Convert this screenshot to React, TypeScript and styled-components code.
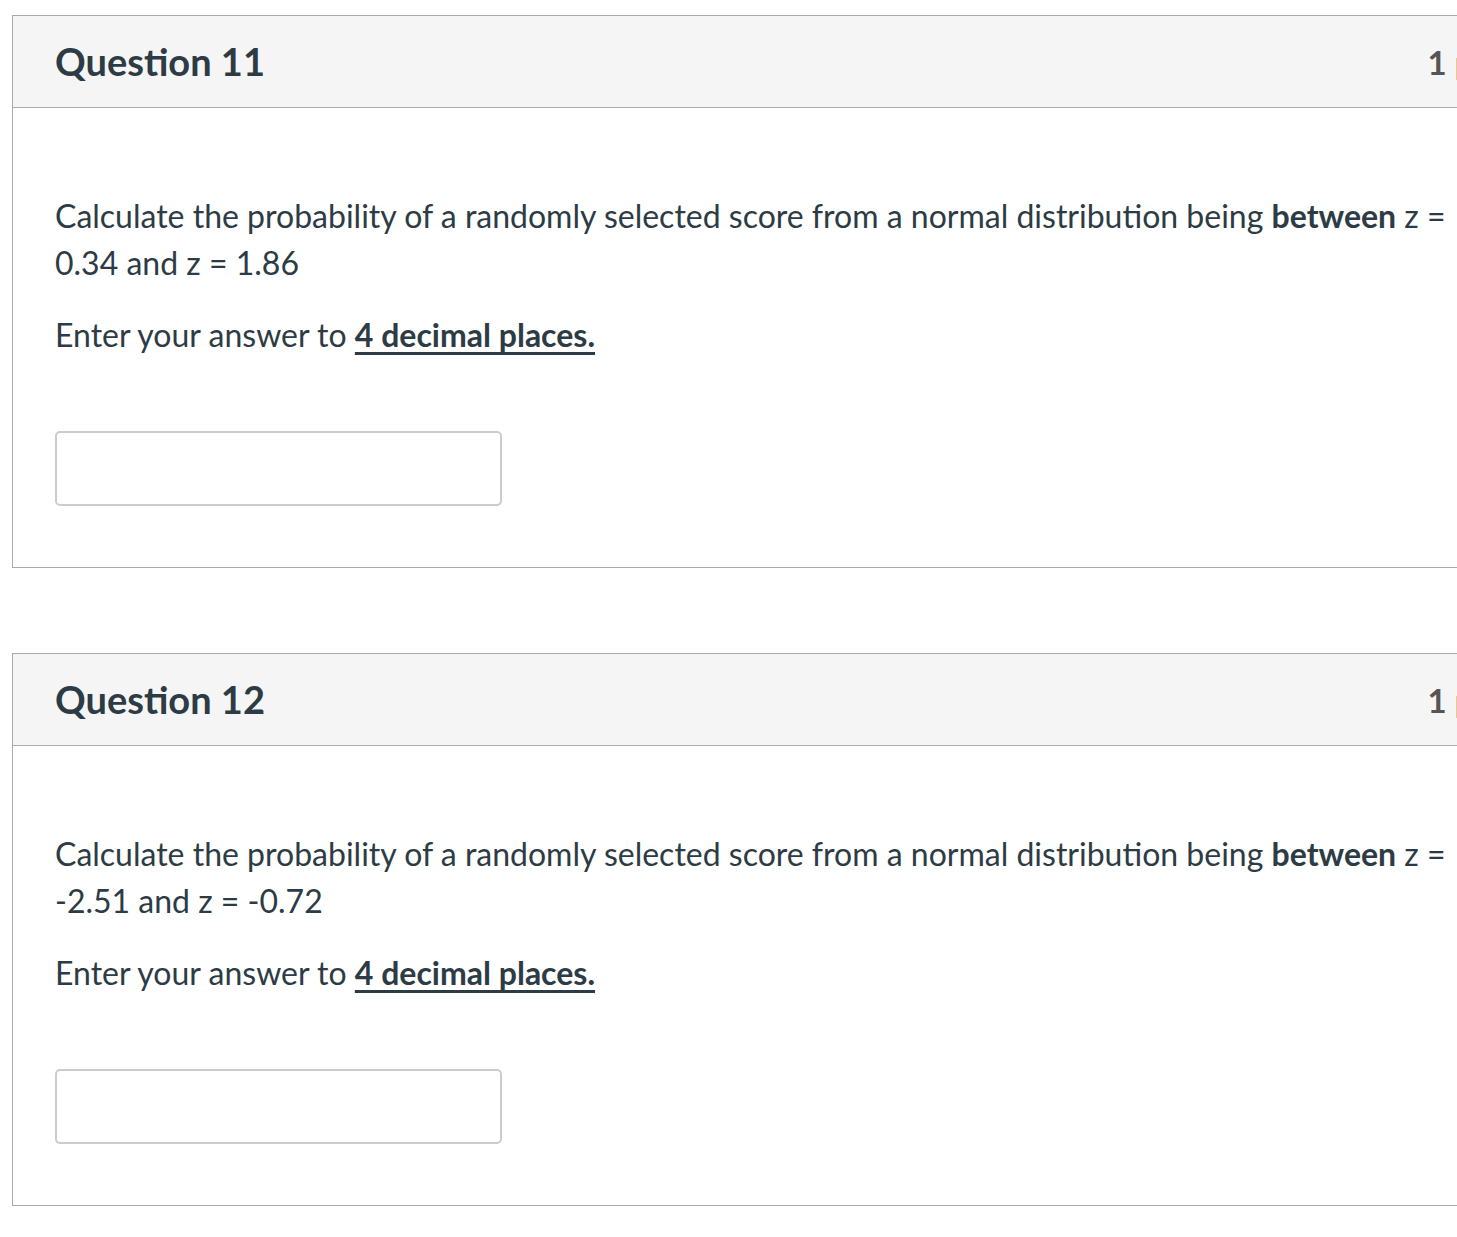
import React from 'react';
import styled, { createGlobalStyle } from 'styled-components';

const GlobalStyle = createGlobalStyle`
  html, body {
    margin: 0;
    padding: 0;
    background: #fff;
    overflow: hidden;
  }

  body {
    font-family: Lato, "Open Sans", sans-serif;
    color: #2d3b45;
  }
`;

const Page = styled.div`
  display: flex;
  flex-direction: column;
  gap: 85px;
  padding: 15px 0 0 12px;
  width: 1600px;
`;

const QuestionCard = styled.section`
  width: 1529px;
  border: 1px solid #aaa;
  background: #fff;
`;

const Header = styled.header`
  display: flex;
  align-items: center;
  justify-content: space-between;
  height: 92px;
  padding: 0 42px;
  background: #f5f5f5;
  border-bottom: 1px solid #aaa;
  box-sizing: border-box;

  h2 {
    margin: 0 0 2px;
    font-size: 38px;
    font-weight: 700;
    color: #2d3b45;
  }
`;

const Points = styled.span`
  font-size: 33px;
  font-weight: 700;
  color: #555;
`;

const Body = styled.div`
  padding: 84px 42px 61px;
`;

const Text = styled.p`
  margin: 0 0 25px;
  font-size: 32px;
  line-height: 47px;

  strong {
    font-weight: 700;
  }

  u {
    font-weight: 700;
    text-underline-offset: 5px;
  }
`;

const AnswerInput = styled.input`
  display: block;
  width: 447px;
  height: 75px;
  margin-top: 73px;
  box-sizing: border-box;
  border: 2px solid #ccc;
  border-radius: 5px;
  background: #fff;
  font-family: inherit;
  font-size: 32px;
  padding: 0 14px;
  outline: none;
`;

interface QuestionProps {
  number: number;
  from: string;
  to: string;
}

function Question({ number, from, to }: QuestionProps) {
  return (
    <QuestionCard>
      <Header>
        <h2>Question {number}</h2>
        <Points>1 pts</Points>
      </Header>
      <Body>
        <Text>
          Calculate the probability of a randomly selected score from a normal distribution being{' '}
          <strong>between</strong> z = {from} and z = {to}
        </Text>
        <Text>
          Enter your answer to <u>4 decimal places.</u>
        </Text>
        <AnswerInput type="text" />
      </Body>
    </QuestionCard>
  );
}

export default function App() {
  return (
    <>
      <GlobalStyle />
      <Page>
        <Question number={11} from="0.34" to="1.86" />
        <Question number={12} from="-2.51" to="-0.72" />
      </Page>
    </>
  );
}
